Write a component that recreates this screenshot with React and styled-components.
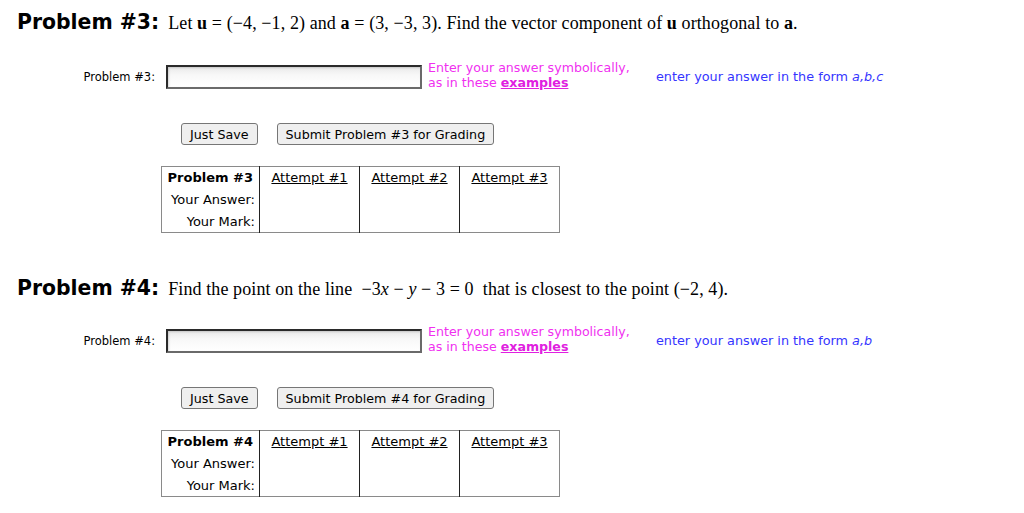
import React from "react";
import styled, { createGlobalStyle } from "styled-components";

const Global = createGlobalStyle`
  html, body { margin: 0; padding: 0; background: #fff; }
  body { font-family: "DejaVu Sans", Verdana, sans-serif; color: #000; }
`;

const Page = styled.div`
  width: 1024px;
  height: 513px;
  overflow: hidden;
  display: flex;
  flex-direction: column;
`;

const Section = styled.section`
  display: flex;
  flex-direction: column;
  align-items: flex-start;
  flex-shrink: 0;
  height: 264px;
  padding-top: ${(p) => p.$top}px;
  box-sizing: border-box;
`;

const Heading = styled.div`
  display: flex;
  align-items: baseline;
  gap: 9px;
  padding-left: 17px;
  height: 26px;
`;

const HeadTitle = styled.span`
  font-family: "DejaVu Sans", Verdana, sans-serif;
  font-weight: bold;
  font-size: 20.4px;
`;

const Statement = styled.span`
  font-family: "Liberation Serif", "Times New Roman", serif;
  font-size: 18px;
  letter-spacing: 0.1px;
`;

const AnswerRow = styled.div`
  display: flex;
  align-items: center;
  margin-top: ${(p) => p.$gap}px;
  height: 23px;
`;

const AnswerLabel = styled.label`
  width: 155px;
  text-align: right;
  font-size: 11.5px;
  flex-shrink: 0;
`;

const AnswerInput = styled.input`
  margin-left: 11px;
  width: 256px;
  height: 24px;
  box-sizing: border-box;
  border: 2px solid #444;
  border-top-color: #2a2a2a;
  border-left-color: #2a2a2a;
  border-bottom-color: #6a6a6a;
  border-right-color: #6a6a6a;
  background: linear-gradient(#e9e9e9, #f8f8f8 40%, #fff);
  box-shadow: inset 1px 1px 2px rgba(0, 0, 0, 0.15);
  padding: 0;
`;

const Hint = styled.div`
  margin-left: 6px;
  margin-bottom: 3px;
  width: 228px;
  color: #f030f0;
  font-size: 12.6px;
  line-height: 15px;
  flex-shrink: 0;
`;

const HintLink = styled.a`
  color: #e020e0;
  font-weight: bold;
  text-decoration: underline;
`;

const FormHint = styled.div`
  color: #3535ff;
  font-size: 12.8px;
`;

const Buttons = styled.div`
  display: flex;
  gap: 19px;
  margin-top: 35px;
  padding-left: 181px;
`;

const Button = styled.button`
  font-family: "DejaVu Sans", Verdana, sans-serif;
  font-size: 12.7px;
  height: 22px;
  padding: 0 8px;
  background: #efefef;
  border: 1px solid #767676;
  border-radius: 3px;
  color: #000;
`;

const Table = styled.table`
  margin-top: 21px;
  margin-left: 161px;
  border-collapse: collapse;
  border: 1px solid #8a8a8a;
  font-size: 13px;
  table-layout: fixed;
`;

const HeadCell = styled.th`
  text-align: right;
  font-weight: bold;
  width: 98px;
  height: 21px;
  padding: 0 6px 0 0;
  box-sizing: border-box;
  border-right: 1px solid #222;
`;

const LabelCell = styled.td`
  text-align: right;
  height: 22px;
  padding: 0 4px 0 0;
  border-right: 1px solid #222;
  white-space: nowrap;
`;

const AttemptCell = styled.td`
  width: 100px;
  box-sizing: border-box;
  text-align: center;
  vertical-align: top;
  padding: 0;
  border-left: 1px solid #222;
  height: ${(p) => (p.$head ? "21px" : "auto")};
  line-height: 21px;
`;

const AttemptLink = styled.a`
  color: #000;
  text-decoration: underline;
`;

function Problem({ n, statement, form, top, gap }) {
  return (
    <Section $top={top}>
      <Heading>
        <HeadTitle>Problem #{n}:</HeadTitle>
        <Statement>{statement}</Statement>
      </Heading>
      <AnswerRow $gap={gap}>
        <AnswerLabel>Problem #{n}:</AnswerLabel>
        <AnswerInput type="text" />
        <Hint>
          Enter your answer symbolically,
          <br />
          as in these <HintLink href="#">examples</HintLink>
        </Hint>
        <FormHint>
          enter your answer in the form <i>{form}</i>
        </FormHint>
      </AnswerRow>
      <Buttons>
        <Button>Just Save</Button>
        <Button>Submit Problem #{n} for Grading</Button>
      </Buttons>
      <Table>
        <tbody>
          <tr>
            <HeadCell>Problem #{n}</HeadCell>
            {[1, 2, 3].map((a) => (
              <AttemptCell key={a} $head>
                <AttemptLink href="#">Attempt #{a}</AttemptLink>
              </AttemptCell>
            ))}
          </tr>
          <tr>
            <LabelCell>Your Answer:</LabelCell>
            <AttemptCell rowSpan={2} />
            <AttemptCell rowSpan={2} />
            <AttemptCell rowSpan={2} />
          </tr>
          <tr>
            <LabelCell>Your Mark:</LabelCell>
          </tr>
        </tbody>
      </Table>
    </Section>
  );
}

export default function App() {
  return (
    <Page>
      <Global />
      <Problem
        n={3}
        form="a,b,c"
        top={10}
        gap={29}
        statement={
          <>
            Let <b>u</b> = (−4, −1, 2) and <b>a</b> = (3, −3, 3). Find the vector component of <b>u</b> orthogonal to <b>a</b>.
          </>
        }
      />
      <Problem
        n={4}
        form="a,b"
        top={12}
        gap={27}
        statement={
          <>
            Find the point on the line &nbsp;−3<i>x</i> − <i>y</i> − 3 = 0&nbsp; that is closest to the point (−2, 4).
          </>
        }
      />
    </Page>
  );
}
